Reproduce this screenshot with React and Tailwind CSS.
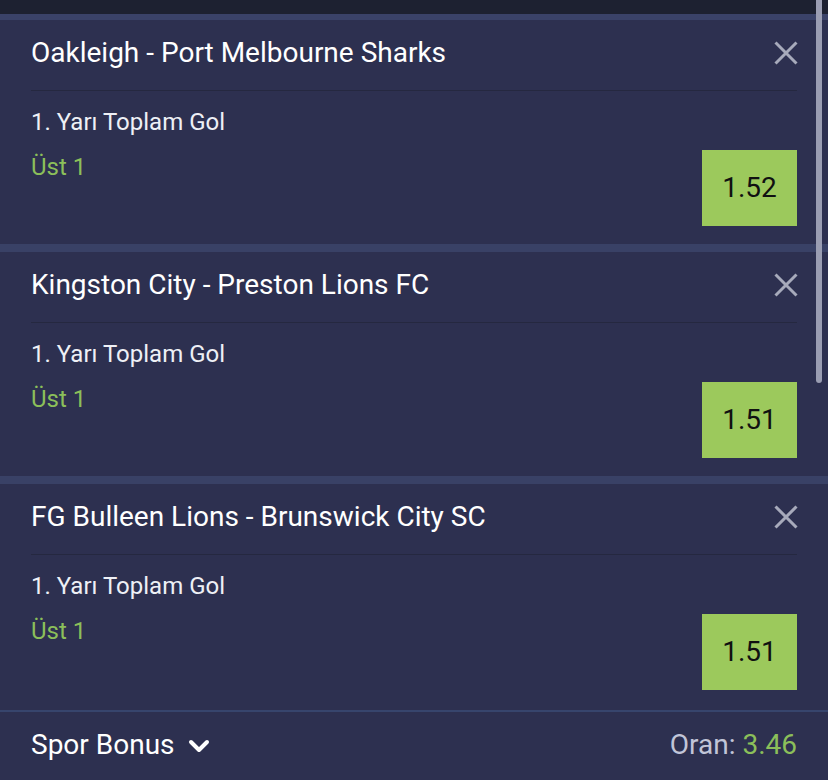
import React from "react";

const bets = [
  { match: "Oakleigh - Port Melbourne Sharks", odd: "1.52" },
  { match: "Kingston City - Preston Lions FC", odd: "1.51" },
  { match: "FG Bulleen Lions - Brunswick City SC", odd: "1.51" },
];

function CloseIcon() {
  return (
    <svg width="24" height="24" viewBox="0 0 24 24" className="block">
      <path d="M1.5 1.5 L22.5 22.5 M22.5 1.5 L1.5 22.5" stroke="#a7aabb" strokeWidth="3" strokeLinecap="butt" fill="none" />
    </svg>
  );
}

function Card({ match, odd }) {
  return (
    <div className="h-[224px] bg-[#2d3050] px-[31px]">
      <div className="h-[71px] border-b border-[#252840]">
        <div className="h-[65px] flex items-center justify-between">
          <span className="text-[28px] leading-[32px] text-white">{match}</span>
          <span className="mr-[-1px]"><CloseIcon /></span>
        </div>
      </div>
      <div className="flex justify-between">
        <div className="pt-[17px]">
          <div className="text-[24px] leading-[28px] text-[#eef0f6]">1. Yarı Toplam Gol</div>
          <div className="mt-[17px] text-[24px] leading-[28px] text-[#8bbf5a]">Üst 1</div>
        </div>
        <div className="mt-[59px] w-[95px] h-[76px] bg-[#9cc95c] flex items-center justify-center text-[28px] text-[#111] leading-none">
          {odd}
        </div>
      </div>
    </div>
  );
}

export default function App() {
  return (
    <div
      className="relative w-[828px] h-[780px] overflow-hidden bg-[#2d3050]"
      style={{ fontFamily: "Roboto, 'Noto Sans', sans-serif" }}
    >
      <div className="h-[14px] bg-[#1d2131]" />
      <div className="h-[6px] bg-[#3a4268]" />
      <Card {...bets[0]} />
      <div className="h-[8px] bg-[#394166]" />
      <Card {...bets[1]} />
      <div className="h-[8px] bg-[#394166]" />
      <Card {...bets[2]} />
      <div className="h-[2px] mt-[2px] bg-[#37456d]" />
      <div className="h-[66px] flex items-center justify-between px-[31px] bg-[#2d3050]">
        <div className="flex items-center">
          <span className="text-[28px] text-white leading-none">Spor Bonus</span>
          <svg width="22" height="15" viewBox="0 0 22 15" className="ml-[13px] mt-[2px]">
            <path d="M3 3 L11 11 L19 3" stroke="#ffffff" strokeWidth="4" fill="none" strokeLinecap="round" strokeLinejoin="round" />
          </svg>
        </div>
        <div className="text-[28px] leading-none">
          <span className="text-[#c1c5d8]">Oran: </span>
          <span className="text-[#8bbf5a]">3.46</span>
        </div>
      </div>
      <div className="absolute left-[816px] top-0 w-[6px] h-[383px] rounded-b-[3px] bg-[#9a9db2]" />
    </div>
  );
}
